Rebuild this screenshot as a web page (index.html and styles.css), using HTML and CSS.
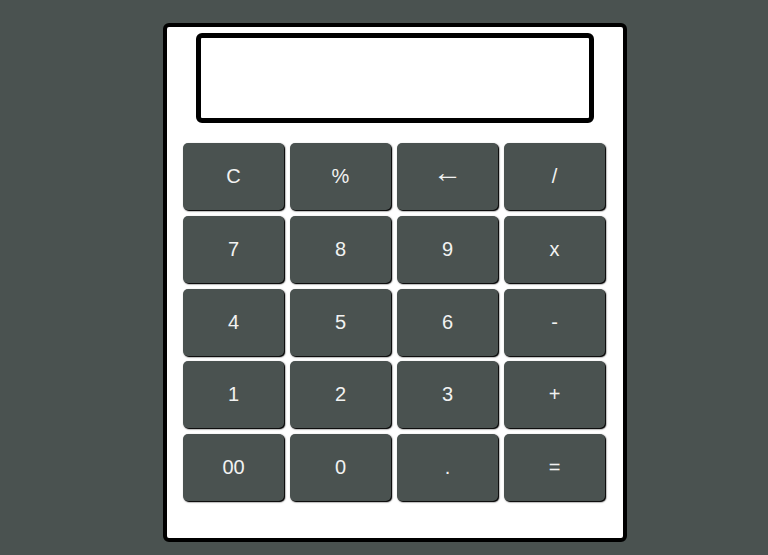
FILE: index.html
```html
<!DOCTYPE html>
<html>
<head>
<meta charset="utf-8">
<link rel="stylesheet" href="styles.css">
</head>
<body>
<div class="calc">
  <div class="display"></div>
  <div class="keys">
    <button class="key">C</button>
    <button class="key">%</button>
    <button class="key key-arrow">←</button>
    <button class="key">/</button>
    <button class="key">7</button>
    <button class="key">8</button>
    <button class="key">9</button>
    <button class="key">x</button>
    <button class="key">4</button>
    <button class="key">5</button>
    <button class="key">6</button>
    <button class="key">-</button>
    <button class="key">1</button>
    <button class="key">2</button>
    <button class="key">3</button>
    <button class="key">+</button>
    <button class="key">00</button>
    <button class="key">0</button>
    <button class="key">.</button>
    <button class="key">=</button>
  </div>
</div>
</body>
</html>
```
FILE: styles.css
```css
html, body {
  margin: 0;
  padding: 0;
  background: #4a5250;
  height: 100%;
}
body {
  font-family: "Liberation Sans", Arial, sans-serif;
  padding-top: 23px;
  padding-left: 163px;
  box-sizing: border-box;
}
.calc {
  width: 464px;
  box-sizing: border-box;
  background: #fff;
  border: 4px solid #000;
  border-radius: 6px;
  padding: 6px 18px 37px 16px;
}
.display {
  width: 398px;
  height: 90px;
  box-sizing: border-box;
  margin: 0 0 20px 13px;
  border: 5px solid #000;
  border-radius: 6px;
  background: #fff;
}
.keys {
  display: grid;
  grid-template-columns: repeat(4, 101px);
  grid-auto-rows: 67px;
  column-gap: 6px;
  row-gap: 5.75px;
}
.key {
  margin: 0;
  border: none;
  border-radius: 5px;
  background: #4a5250;
  color: #f2f2f2;
  font-family: "Liberation Sans", Arial, sans-serif;
  font-size: 20px;
  box-shadow: 1px 1px 1px #000, 1px 1px 2px rgba(0,0,0,0.6);
  padding: 0;
}
.key-arrow {
  font-size: 29px;
  line-height: 1;
  padding-bottom: 8px;
}
```
